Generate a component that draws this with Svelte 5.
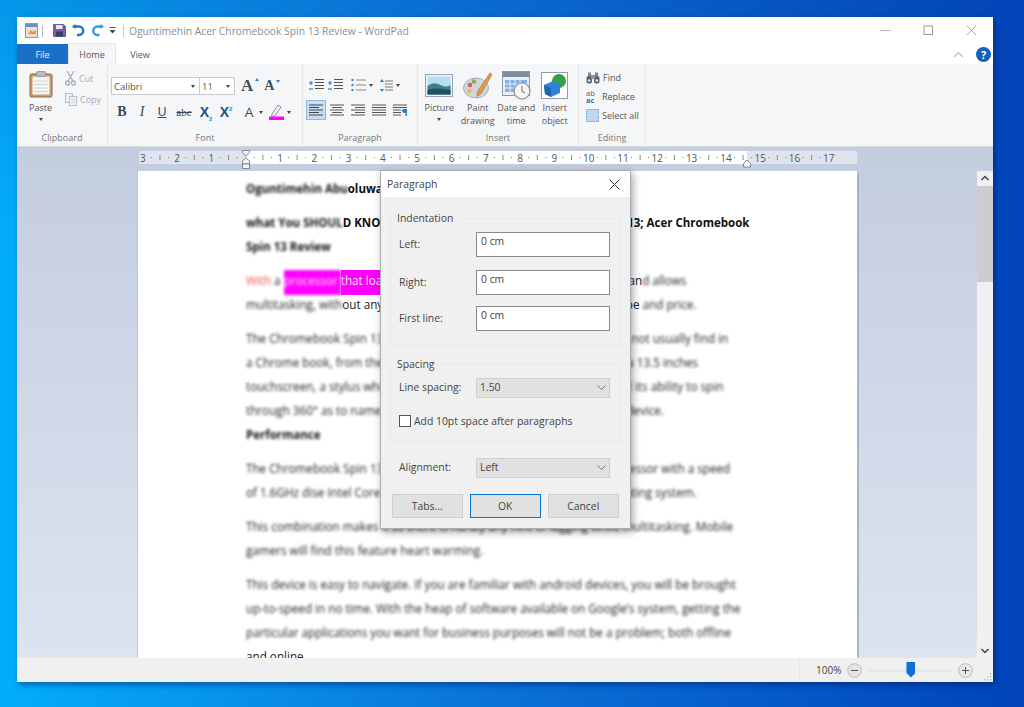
<script>
  const cm = 34.3
  const ticks = Array.from({ length: 21 }, (_, i) => i - 3)

  const paragraphs = [
    [[['Oguntimehin Abu', 'bb'], ['oluwa', 'b'], ['seun', 'b']]],
    [
      [['what You SHOUL', 'bb'], ['D KNOW ABOUT A NEW ACER CHROMEBOOK SPIN ', 'b'], ['13; Acer Chromebook', 'b']],
      [['Spin 13 Review', 'bb']]
    ],
    [
      [['With', 'bl red'], [' a ', 'bl'], ['processor\u00a0', 'bl hl'], ['that loads apps so fast', 'hl'], [' as the 2-in-1 screen flips over an', ''], ['d allows', 'bl']],
      [['multitasking, with', 'bl'], ['out any compromise on its speed, performance, shape', ''], [' and price.', 'bl']]
    ],
    [
      [['The Chromebook Spin 13 is one of those devices with features you will not usually find in', 'bl']],
      [['a Chrome book, from the lightweight aluminium body and a design to a 13.5 inches', 'bl']],
      [['touchscreen, a stylus which comes with them, is pressure sensitive and its ability to spin', 'bl']],
      [['through 360° as to name a few things about this beautiful convertible device.', 'bl']],
      [['Performance', 'bb']]
    ],
    [
      [['The Chromebook Spin 13 comes with an Intel Core m3 low power processor with a speed', 'bl']],
      [['of 1.6GHz dise Intel Core with a 4GB of memory and the Chrome operating system.', 'bl']]
    ],
    [
      [['This combination makes it so there is hardly any hint of lagging while multitasking. Mobile', 'bl']],
      [['gamers will find this feature heart warming.', 'bl']]
    ],
    [
      [['This device is easy to navigate. If you are familiar with android devices, you will be brought', 'bl']],
      [['up-to-speed in no time. With the heap of software available on Google’s system, getting the', 'bl']],
      [['particular applications you want for business purposes will not be a problem; both offline', 'bl']],
      [['and online.', '']]
    ]
  ]
</script>

<div class="desktop">
  <div class="window">
    <header class="titlebar">
      <svg class="app-icon" width="14" height="16" viewBox="0 0 14 16">
        <rect x="0.5" y="0.5" width="12" height="14" fill="#dfe5ef" stroke="#8497ad" />
        <rect x="1" y="1" width="11" height="3" fill="#6f8fb5" />
        <rect x="2" y="6" width="9" height="6" fill="#f5d9a8" />
        <path d="M3 11l3-4 2 2 3-2v4z" fill="#e9964a" />
      </svg>
      <span class="bar"></span>
      <svg class="qa save" width="13" height="13" viewBox="0 0 13 13">
        <path d="M0.5 0.5h10l2 2v10h-12z" fill="#7c5fa0" stroke="#5d4683" stroke-width="0.8" />
        <rect x="3" y="1" width="6.5" height="4" fill="#e8e6f2" />
        <rect x="3" y="7.5" width="7" height="5" fill="#34406f" />
      </svg>
      <svg class="qa undo" width="13" height="13" viewBox="0 0 13 13">
        <path d="M1.5 2.5h5.5a4 4 0 0 1 0 8.5h-2" fill="none" stroke="#1b77c9" stroke-width="2.4" />
        <path d="M0 2.5l3.5-2.5v5z" fill="#1b77c9" />
      </svg>
      <svg class="qa redo" width="13" height="13" viewBox="0 0 13 13">
        <path d="M11 2.5h-4.5a4 4 0 0 0 0 8.5h2" fill="none" stroke="#2f9be0" stroke-width="2.4" />
        <path d="M13 2.5l-3.5-2.5v5z" fill="#2f9be0" />
      </svg>
      <svg class="qa more" width="7" height="7" viewBox="0 0 7 7">
        <rect x="0.5" y="0" width="6" height="1" fill="#555" />
        <path d="M0.5 3h6l-3 3.5z" fill="#444" />
      </svg>
      <span class="bar tan"></span>
      <span class="doc-title">Oguntimehin Acer Chromebook Spin 13 Review - WordPad</span>
      <div class="caption">
        <svg width="11" height="11" viewBox="0 0 11 11"><path d="M0 5.5h11" stroke="#bbb" /></svg>
        <svg width="11" height="11" viewBox="0 0 11 11"><rect x="1" y="1" width="8.5" height="8.5" fill="none" stroke="#999" /></svg>
        <svg width="11" height="11" viewBox="0 0 11 11"><path d="M1 1l9 9M10 1l-9 9" stroke="#aaa" /></svg>
      </div>
    </header>

    <nav class="tabs">
      <span class="tab file">File</span>
      <span class="tab home">Home</span>
      <span class="tab">View</span>
      <svg class="collapse" width="11" height="7" viewBox="0 0 11 7"><path d="M1 6l4.500-4.500L10 6" fill="none" stroke="#bdbdbd" stroke-width="1.200" /></svg>
      <span class="help">?</span>
    </nav>

    <section class="ribbon">
      <div class="group clipboard">
        <div class="group-body">
          <div class="paste">
            <svg width="24" height="27" viewBox="0 0 24 27">
              <rect x="1" y="3" width="22" height="23" rx="1.500" fill="#c59a6d" stroke="#8c6a48" />
              <rect x="3.500" y="5.500" width="17" height="18" fill="#f5f5f3" />
              <path d="M5 10h14M5 13.500h14M5 17h14M5 20.500h14" stroke="#d4d4d4" />
              <rect x="7.500" y="0.500" width="9" height="5" rx="1" fill="#b9bcc2" stroke="#888" stroke-width="0.700" />
            </svg>
            <span class="lbl">Paste</span>
            <span class="caret"></span>
          </div>
          <div class="cut-copy">
            <div class="mini muted">
              <svg width="11" height="15" viewBox="0 0 11 15">
                <path d="M2 0l6 10M9 0L3 10" stroke="#a9b0bb" stroke-width="1.300" />
                <circle cx="2.500" cy="12" r="2" fill="none" stroke="#a9b0bb" stroke-width="1.300" />
                <circle cx="8.500" cy="12" r="2" fill="none" stroke="#a9b0bb" stroke-width="1.300" />
              </svg>
              <span>Cut</span>
            </div>
            <div class="mini muted">
              <svg width="12" height="13" viewBox="0 0 12 13">
                <rect x="0.500" y="0.500" width="7" height="9" fill="#eef0f3" stroke="#b8bdc6" />
                <rect x="4.500" y="3.500" width="7" height="9" fill="#f6f7f8" stroke="#b8bdc6" />
                <path d="M6 6h4M6 8h4M6 10h4" stroke="#cdd0d6" />
              </svg>
              <span>Copy</span>
            </div>
          </div>
        </div>
        <span class="group-label">Clipboard</span>
      </div>

      <div class="group font">
        <div class="group-body column">
          <div class="font-row">
            <div class="combo name"><span>Calibri</span><i class="caret dark"></i></div>
            <div class="combo size"><span>11</span><i class="caret dark"></i></div>
            <span class="grow big">A<i class="tri up"></i></span>
            <span class="grow small">A<i class="tri down"></i></span>
          </div>
          <div class="format-row">
            <span class="fmt bold">B</span>
            <span class="fmt ital">I</span>
            <span class="fmt under">U</span>
            <span class="fmt strike">abc</span>
            <span class="fmt script">X<sub>2</sub></span>
            <span class="fmt script">X<sup>2</sup></span>
            <span class="fmt color">A</span>
            <i class="caret dark"></i>
            <svg class="marker" width="15" height="16" viewBox="0 0 15 16">
              <path d="M3 10l6-9 3 2-6 9-3.500 0z" fill="#eee" stroke="#8b93a0" />
              <rect x="0" y="12.500" width="15" height="3.500" fill="#f0f" />
            </svg>
            <i class="caret dark"></i>
          </div>
        </div>
        <span class="group-label">Font</span>
      </div>

      <div class="group para">
        <div class="group-body column">
          <div class="para-row top">
            {#each [0, 1] as n}
              <svg width="16" height="14" viewBox="0 0 16 14">
                <path d="M6 1.500h9M6 4.500h9M6 7.500h9M6 10.500h9" stroke="#555" />
                <path d="M0 5h4M2 3v4" stroke="#2a7fd0" stroke-width="1.200" />
                <path d="M0 11h4" stroke="#2a7fd0" stroke-width="1.200" />
              </svg>
            {/each}
            <svg class="wide" width="15" height="14" viewBox="0 0 15 14">
              <path d="M5 2h10M5 7h10M5 12h10" stroke="#888" />
              <path d="M0.500 2h2M0.500 7h2M0.500 12h2" stroke="#2a7fd0" stroke-width="2" />
            </svg>
            <i class="caret dark"></i>
            <svg class="wide" width="13" height="15" viewBox="0 0 13 15">
              <path d="M5 3h8M5 6h8M5 9h8M5 12h8" stroke="#777" />
              <path d="M0 4l2-3 2 3zM0 11l2 3 2-3z" fill="#2a7fd0" />
            </svg>
            <i class="caret dark"></i>
          </div>
          <div class="para-row">
            <span class="align active">
              <svg width="14" height="12" viewBox="0 0 14 12"><path d="M0 1h14M0 3.500h10M0 6h14M0 8.500h10M0 11h14" stroke="#444" /></svg>
            </span>
            <span class="align">
              <svg width="14" height="12" viewBox="0 0 14 12"><path d="M0 1h14M2 3.500h10M0 6h14M2 8.500h10M0 11h14" stroke="#555" /></svg>
            </span>
            <span class="align">
              <svg width="14" height="12" viewBox="0 0 14 12"><path d="M0 1h14M4 3.500h10M0 6h14M4 8.500h10M0 11h14" stroke="#555" /></svg>
            </span>
            <span class="align">
              <svg width="14" height="12" viewBox="0 0 14 12"><path d="M0 1h14M0 3.500h14M0 6h14M0 8.500h14M0 11h14" stroke="#555" /></svg>
            </span>
            <span class="align">
              <svg width="14" height="12" viewBox="0 0 14 12">
                <path d="M0 1h14M0 3.500h14M0 6h8M0 8.500h8M0 11h8" stroke="#555" />
                <path d="M10 5h4v7h-1.500v-3.500a2 2 0 0 1-2.500-3.500z" fill="#2a7fd0" />
              </svg>
            </span>
          </div>
        </div>
        <span class="group-label">Paragraph</span>
      </div>

      <div class="group insert">
        <div class="group-body">
          <div class="tool">
            <svg width="28" height="23" viewBox="0 0 28 23">
              <rect x="0.500" y="0.500" width="27" height="22" fill="#eef1f5" stroke="#9aa5b4" />
              <rect x="2.500" y="2.500" width="23" height="18" fill="#b9dcee" />
              <path d="M2.500 12c5-4 9-3 13-1s7 2 10 0v9.500h-23z" fill="#3f7f8c" />
              <path d="M2.500 16c8-3 15-1 23 0v4.500h-23z" fill="#24505c" />
            </svg>
            <span class="lbl">Picture</span>
            <span class="caret"></span>
          </div>
          <div class="tool">
            <svg width="30" height="27" viewBox="0 0 30 27">
              <ellipse cx="13" cy="16" rx="12.500" ry="10" fill="#cfd6df" stroke="#a7afba" />
              <circle cx="7" cy="13" r="2.200" fill="#d95b4a" />
              <circle cx="11" cy="9.500" r="2.200" fill="#7fb24a" />
              <circle cx="6.500" cy="19" r="2.200" fill="#e9b83f" />
              <path d="M27 1l2 1.500-11 19-4 3 .500-5z" fill="#e59a3b" stroke="#a9692a" stroke-width="0.600" />
            </svg>
            <span class="lbl">Paint<br />drawing</span>
          </div>
          <div class="tool">
            <svg width="29" height="29" viewBox="0 0 29 29">
              <rect x="0.500" y="0.500" width="27" height="24" fill="#e9eff8" stroke="#8d98aa" />
              <rect x="1" y="1" width="26" height="5" fill="#7f8da3" />
              <path d="M3 9h22v12H3z" fill="#7fb0ea" />
              <path d="M3 13h22M3 17h22M8 9v12M13 9v12M18 9v12" stroke="#eaf2fc" />
              <circle cx="20" cy="20" r="8" fill="#f6f6f6" stroke="#8d8d8d" stroke-width="1.200" />
              <path d="M20 15v5.500l3 1.500" fill="none" stroke="#666" />
            </svg>
            <span class="lbl">Date and<br />time</span>
          </div>
          <div class="tool">
            <svg width="27" height="27" viewBox="0 0 27 27">
              <rect x="0.500" y="0.500" width="26" height="26" fill="#fff" stroke="#9a9a9a" />
              <circle cx="18" cy="9" r="7" fill="#34a04a" />
              <path d="M3 13l9-4 7 3v9l-9 4-6-3z" fill="#2e85d8" />
              <path d="M3 13l7 3v9l-6-3z" fill="#2266ad" />
            </svg>
            <span class="lbl">Insert<br />object</span>
          </div>
        </div>
        <span class="group-label">Insert</span>
      </div>

      <div class="group editing">
        <div class="group-body column">
          <div class="mini">
            <svg width="14" height="12" viewBox="0 0 14 12">
              <rect x="0.500" y="4" width="5.500" height="7.500" rx="2" fill="#56606e" />
              <rect x="8" y="4" width="5.500" height="7.500" rx="2" fill="#56606e" />
              <rect x="5" y="3" width="4" height="4" fill="#8b95a3" />
              <rect x="2" y="0.500" width="3" height="4" fill="#7b8593" />
              <rect x="9" y="0.500" width="3" height="4" fill="#7b8593" />
              <circle cx="3.200" cy="8.500" r="1.500" fill="#bcd5ee" />
              <circle cx="10.800" cy="8.500" r="1.500" fill="#bcd5ee" />
            </svg>
            <span>Find</span>
          </div>
          <div class="mini">
            <span class="replace"><b>ab</b><b class="blue">ac</b></span>
            <span>Replace</span>
          </div>
          <div class="mini">
            <svg width="13" height="13" viewBox="0 0 13 13">
              <rect x="0.500" y="0.500" width="12" height="12" fill="#bcd8f3" stroke="#6f98c4" stroke-dasharray="1.500 1" />
            </svg>
            <span>Select all</span>
          </div>
        </div>
        <span class="group-label">Editing</span>
      </div>
    </section>

    <div class="work">
      <div class="ruler">
        <svg width="976" height="25" viewBox="17 146 976 25">
          <rect x="139" y="151" width="718" height="13" fill="#dfe4ee" />
          <rect x="246" y="151" width="501" height="13" fill="#fff" />
          {#each ticks as t}
            {@const x = 245.7 + t * cm}
            {#if t !== 0}
              <text {x} y="161.500" text-anchor="middle" class="rule-num">{Math.abs(t)}</text>
            {/if}
            {#if t < 17}
              <rect x={x + cm * 0.25 - 0.500} y="157" width="1" height="1" fill="#777" />
              <rect x={x + cm * 0.5 - 0.500} y="155" width="1" height="5" fill="#888" />
              <rect x={x + cm * 0.75 - 0.500} y="157" width="1" height="1" fill="#777" />
            {/if}
          {/each}
          <path d="M242.500 150.500h7v2l-3.500 4-3.500-4zM246 158l3.500 3v3h-7v-3z" fill="#f3f5f8" stroke="#7c8794" />
          <rect x="242.500" y="164" width="7" height="4.500" fill="#f3f5f8" stroke="#7c8794" />
          <path d="M747 160l3.500 3.500v3.500h-7v-3.500z" fill="#f3f5f8" stroke="#7c8794" />
        </svg>
      </div>
      <div class="main">
        <div class="canvas">
          <div class="page">
            {#each paragraphs as para}
              <div class="para-text">
                {#each para as line}
                  <div class="line">
                    {#each line as [text, cls]}<span class={cls}>{text}</span>{/each}
                  </div>
                {/each}
              </div>
            {/each}
          </div>
        </div>
        <div class="scrollbar">
          <svg class="arrow" width="16" height="15" viewBox="0 0 16 15"><path d="M4.500 9l3.500-3.500L11.500 9" fill="none" stroke="#444" stroke-width="1.500" /></svg>
          <div class="thumb"></div>
          <svg class="arrow end" width="16" height="15" viewBox="0 0 16 15"><path d="M4.500 6l3.500 3.500L11.500 6" fill="none" stroke="#444" stroke-width="1.500" /></svg>
        </div>
      </div>
    </div>

    <footer class="status">
      <span class="sep"></span>
      <span class="zoom-val">100%</span>
      <svg class="round" width="15" height="15" viewBox="0 0 15 15"><circle cx="7.500" cy="7.500" r="6.800" fill="#e4e4e4" stroke="#bbb" /><path d="M4 7.500h7" stroke="#555" /></svg>
      <div class="slider"><span class="knob"></span></div>
      <svg class="round" width="15" height="15" viewBox="0 0 15 15"><circle cx="7.500" cy="7.500" r="6.800" fill="#e9e9e9" stroke="#bbb" /><path d="M4 7.500h7M7.500 4v7" stroke="#555" /></svg>
      <svg class="grip" width="9" height="9" viewBox="0 0 9 9"><path d="M7 1h1.500v1.500H7zM4 4h1.500v1.500H4zM7 4h1.500v1.500H7zM1 7h1.500v1.500H1zM4 7h1.500v1.500H4zM7 7h1.500v1.500H7z" fill="#c4c4c4" /></svg>
    </footer>

    <div class="dialog">
      <div class="dlg-title">
        <span>Paragraph</span>
        <svg width="11" height="11" viewBox="0 0 11 11"><path d="M0.500 0.500l10 10M10.500 0.500l-10 10" stroke="#333" /></svg>
      </div>
      <div class="dlg-body">
        <fieldset class="indent">
          <legend>Indentation</legend>
          <label class="row"><span>Left:</span><div class="input">0 cm</div></label>
          <label class="row"><span>Right:</span><div class="input">0 cm</div></label>
          <label class="row"><span>First line:</span><div class="input">0 cm</div></label>
        </fieldset>
        <fieldset class="spacing">
          <legend>Spacing</legend>
          <div class="row low">
            <span>Line spacing:</span>
            <div class="select">1.50<svg width="9" height="5" viewBox="0 0 9 5"><path d="M0.500 0.500l4 4 4-4" fill="none" stroke="#777" /></svg></div>
          </div>
          <div class="check"><span class="box"></span><span>Add 10pt space after paragraphs</span></div>
        </fieldset>
        <div class="row low align-row">
          <span>Alignment:</span>
          <div class="select">Left<svg width="9" height="5" viewBox="0 0 9 5"><path d="M0.500 0.500l4 4 4-4" fill="none" stroke="#777" /></svg></div>
        </div>
        <div class="buttons">
          <button>Tabs...</button>
          <button class="primary">OK</button>
          <button>Cancel</button>
        </div>
      </div>
    </div>
  </div>
</div>

<style>
  :global(body) {
    margin: 0;
    overflow: hidden;
  }

  .desktop {
    box-sizing: border-box;
    height: 707px;
    padding: 17px 31px 25px 17px;
    background:
      linear-gradient(180deg, rgba(12, 70, 170, 0.22) 0%, rgba(12, 70, 170, 0) 35%),
      linear-gradient(90deg, #02aefc 0%, #0a76da 45%, #0043bb 100%);
    font-family: "Open Sans", "Liberation Sans", sans-serif;
    color: #444;
  }

  .window {
    position: relative;
    display: flex;
    flex-direction: column;
    height: 665px;
    background: #fff;
    box-shadow: 2px 3px 6px rgba(0, 20, 80, 0.45);
  }

  .titlebar {
    display: flex;
    align-items: center;
    height: 27px;
    padding: 0 0 0 8px;
    flex: none;
  }

  .bar {
    width: 1px;
    height: 12px;
    margin: 0 10px 0 3px;
    background: #bbb;
  }

  .bar.tan {
    margin: 0 5px 0 7px;
    background: #d8c7ae;
  }

  .qa {
    margin-right: 6px;
  }

  .more {
    margin-left: -1px;
    margin-right: 0;
  }

  .doc-title {
    font-size: 10.300px;
    color: #8d8d8d;
    white-space: nowrap;
  }

  .caption {
    display: flex;
    gap: 32px;
    margin-left: auto;
    margin-right: 16px;
  }

  .tabs {
    display: flex;
    align-items: stretch;
    height: 20px;
    flex: none;
    font-size: 9px;
    color: #555;
    position: relative;
  }

  .tab {
    display: flex;
    align-items: center;
    justify-content: center;
    width: 48px;
  }

  .tab.file {
    width: 51px;
    background: #1a6fc6;
    color: #e8f1fb;
  }

  .tab.home {
    width: 48px;
    background: #f5f6f7;
    border: 1px solid #e4e6e9;
    border-bottom: 0;
    box-sizing: border-box;
    margin-top: -1px;
    height: 21px;
  }

  .collapse {
    margin-left: auto;
    margin-right: 6px;
    align-self: center;
  }

  .help {
    width: 15px;
    height: 15px;
    border-radius: 50%;
    background: #1560b4;
    color: #fff;
    font-size: 11px;
    font-weight: 700;
    line-height: 15px;
    text-align: center;
    align-self: center;
    margin: 0 2px 0 6px;
  }

  .ribbon {
    display: flex;
    height: 82px;
    flex: none;
    background: #f5f6f7;
    font-size: 9px;
    color: #555;
  }

  .group {
    display: flex;
    flex-direction: column;
    box-sizing: border-box;
    border-right: 1px solid #e3e5e8;
    margin-bottom: 1px;
  }

  .group-body {
    flex: 1;
    display: flex;
  }

  .column {
    flex-direction: column;
  }

  .group-label {
    text-align: center;
    font-size: 9px;
    color: #777;
    line-height: 14px;
  }

  .clipboard {
    width: 91px;
  }

  .paste {
    display: flex;
    flex-direction: column;
    align-items: center;
    width: 25px;
    margin: 7px 0 0 11px;
  }

  .paste .lbl {
    margin-top: 4px;
  }

  .lbl {
    line-height: 12.500px;
    text-align: center;
    white-space: nowrap;
  }

  .caret {
    display: block;
    width: 0;
    height: 0;
    margin-top: 3px;
    border: 2.500px solid transparent;
    border-top: 3px solid #444;
    border-bottom: 0;
  }

  .caret.dark {
    margin-top: 0;
    flex: none;
  }

  .cut-copy {
    display: flex;
    flex-direction: column;
    gap: 2px;
    margin: 5px 0 0 12px;
  }

  .mini {
    display: flex;
    align-items: center;
    gap: 3px;
    height: 19px;
  }

  .muted {
    color: #a6abb3;
  }

  .font {
    width: 195px;
  }

  .font-row {
    display: flex;
    align-items: center;
    margin: 12px 0 0 3px;
  }

  .combo {
    display: flex;
    align-items: center;
    justify-content: space-between;
    box-sizing: border-box;
    height: 18px;
    padding: 0 4px 0 2px;
    background: #fff;
    border: 1px solid #c5c8cd;
    font-size: 9.500px;
    color: #555;
  }

  .combo.name {
    width: 89px;
  }

  .combo.size {
    width: 36px;
    margin-left: -1px;
  }

  .grow {
    position: relative;
    font-family: "Liberation Serif", serif;
    font-weight: 700;
    color: #444c58;
  }

  .grow.big {
    font-size: 17px;
    margin-left: 6px;
  }

  .grow.small {
    font-size: 14px;
    margin-left: 11px;
  }

  .tri {
    position: absolute;
    top: 2px;
    right: -6px;
    border: 2.500px solid transparent;
  }

  .tri.up {
    border-bottom: 3px solid #2a7fd0;
    border-top: 0;
  }

  .tri.down {
    border-top: 3px solid #2a7fd0;
    border-bottom: 0;
  }

  .format-row {
    display: flex;
    align-items: center;
    margin: 8px 0 0 4px;
  }

  .fmt {
    display: block;
    width: 20px;
    text-align: center;
    font-size: 13px;
    color: #3c4656;
    font-family: "Liberation Serif", serif;
    white-space: nowrap;
  }

  .bold {
    font-weight: 700;
    font-size: 14px;
  }

  .ital {
    font-style: italic;
    font-size: 14px;
  }

  .under {
    text-decoration: underline;
    font-family: "Liberation Sans", sans-serif;
    font-size: 12px;
  }

  .strike {
    text-decoration: line-through;
    font-size: 11px;
    margin: 0 2px;
  }

  .script {
    font-family: "Liberation Sans", sans-serif;
    font-weight: 700;
    font-size: 14px;
    color: #1f4f8a;
  }

  .script sub,
  .script sup {
    font-size: 6px;
    color: #2a7fd0;
    line-height: 0;
  }

  .color {
    width: 16px;
    margin-left: 5px;
    margin-right: 2px;
    font-size: 13px;
    font-family: "Liberation Sans", sans-serif;
  }

  .marker {
    margin: 0 3px 0 6px;
  }

  .para {
    width: 115px;
  }

  .para-row {
    display: flex;
    align-items: center;
    margin-left: 3px;
  }

  .para-row.top {
    height: 18px;
    margin: 12px 0 0 6px;
    gap: 3px;
  }

  .para-row.top .wide {
    margin-left: 4px;
  }

  .para-row:not(.top) {
    margin-top: 6px;
  }

  .align {
    display: flex;
    align-items: center;
    justify-content: center;
    box-sizing: border-box;
    width: 20px;
    height: 20px;
    margin-right: 1px;
    border: 1px solid transparent;
  }

  .align.active {
    background: #c7dff5;
    border-color: #8db8e0;
  }

  .insert {
    width: 161px;
  }

  .insert .group-body {
    padding: 7px 0 0 2px;
    gap: 0;
  }

  .tool {
    display: flex;
    flex-direction: column;
    align-items: center;
    width: 38.500px;
  }

  .tool svg {
    height: 29px;
    margin-bottom: 2px;
  }

  .editing {
    width: 67px;
    border-right: 1px solid #e9ebed;
  }

  .editing .group-body {
    padding: 4px 0 0 7px;
  }

  .replace {
    display: flex;
    flex-direction: column;
    width: 13px;
    font-size: 7.500px;
    line-height: 6.500px;
    color: #555;
    font-weight: 400;
  }

  .replace b {
    font-weight: 400;
  }

  .replace .blue {
    color: #1f6fc0;
    font-weight: 700;
  }

  .work {
    flex: 1;
    min-height: 0;
    display: flex;
    flex-direction: column;
    background: linear-gradient(180deg, #c3cde0 0%, #dde4f0 100%);
    border-top: 0;
    box-shadow: inset 0 1px 0 #d9dadd;
  }

  .ruler {
    height: 25px;
    flex: none;
  }

  .ruler svg {
    display: block;
  }

  .rule-num {
    font-family: "Open Sans", sans-serif;
    font-size: 10px;
    fill: #555;
  }

  .main {
    flex: 1;
    min-height: 0;
    display: flex;
  }

  .canvas {
    flex: 1;
    min-width: 0;
    overflow: hidden;
    padding-left: 121px;
  }

  .page {
    box-sizing: border-box;
    width: 719px;
    height: 100%;
    padding: 5px 0 0 108px;
    background: #fff;
    box-shadow: -1.500px 0 1px #aab2c6, 1.500px 0 1px #aab2c6;
    font-size: 11.700px;
    color: #222;
    overflow: hidden;
  }

  .para-text {
    margin-bottom: 10px;
  }

  .line {
    height: 24px;
    line-height: 24px;
    white-space: nowrap;
  }

  .b,
  .bb {
    font-weight: 700;
    font-size: 11.500px;
    color: #111;
  }

  .bl,
  .bb {
    filter: blur(1.600px);
  }

  .red {
    color: #f05050;
  }

  .hl {
    display: inline-block;
    vertical-align: top;
    height: 25px;
    margin-top: 2px;
    line-height: 20px;
    background: #f0f;
    color: #f8e0f8;
  }

  .scrollbar {
    position: relative;
    display: flex;
    flex-direction: column;
    flex: none;
    width: 16px;
    background: #f0f0f0;
  }

  .arrow {
    flex: none;
  }

  .arrow.end {
    margin-top: auto;
  }

  .thumb {
    height: 96px;
    background: #cdcdcd;
  }

  .status {
    display: flex;
    align-items: center;
    height: 24px;
    flex: none;
    background: #f0f0f0;
    font-size: 10px;
    color: #444;
    position: relative;
  }

  .sep {
    width: 1px;
    height: 22px;
    margin-left: 782px;
    background: #e6e6e6;
  }

  .zoom-val {
    margin-left: 16px;
  }

  .round {
    margin-left: 6px;
  }

  .slider {
    position: relative;
    width: 84px;
    height: 3px;
    margin-left: 6px;
    background: #e6e6e6;
  }

  .knob {
    position: absolute;
    left: 38px;
    top: -7px;
    width: 9px;
    height: 16px;
    background: #0f6fd6;
    clip-path: polygon(0 0, 100% 0, 100% 72%, 50% 100%, 0 72%);
  }

  .grip {
    position: absolute;
    right: 1px;
    bottom: 1px;
  }

  /* the dialog floats over the document */
  .dialog {
    position: absolute;
    left: 363px;
    top: 153px;
    box-sizing: border-box;
    width: 251px;
    height: 359px;
    background: #f0f0f0;
    border: 1px solid #a9adb3;
    box-shadow: 2px 3px 8px rgba(0, 0, 0, 0.35);
    font-size: 10.400px;
    color: #444;
  }

  .dlg-title {
    display: flex;
    align-items: center;
    justify-content: space-between;
    height: 26px;
    padding: 0 10px 0 6px;
    background: #fff;
  }

  .dlg-body {
    padding: 0 9px;
  }

  fieldset {
    margin: 14px 0 0;
    padding: 7px 0 14px 8px;
    border: 1px solid #e8e8e8;
    min-width: 0;
  }

  .spacing {
    margin-top: 11px;
    padding-bottom: 14px;
  }

  legend {
    padding: 0 6px 0 0;
    margin-left: -2px;
    line-height: 14px;
  }

  .row {
    display: flex;
    align-items: center;
    height: 25px;
    margin-bottom: 13px;
  }

  .indent .row:nth-of-type(2) {
    margin-bottom: 11px;
  }

  .indent .row:last-of-type {
    margin-bottom: 0;
  }

  .row > span {
    width: 77px;
    margin-top: -2px;
  }

  .input {
    box-sizing: border-box;
    width: 133.500px;
    height: 25px;
    padding: 1px 4px;
    background: #fff;
    border: 1px solid #8a8a8a;
    line-height: 14px;
  }

  .row.low {
    height: 20px;
    margin-bottom: 16px;
  }

  .select {
    display: flex;
    align-items: center;
    justify-content: space-between;
    box-sizing: border-box;
    width: 133.500px;
    height: 20px;
    padding: 0 3px 2px 3px;
    background: #e1e1e1;
    border: 1px solid #cfcfcf;
  }

  .check {
    display: flex;
    align-items: center;
    gap: 3px;
    height: 13px;
  }

  .box {
    width: 12px;
    height: 12px;
    box-sizing: border-box;
    background: #fff;
    border: 1px solid #555;
  }

  .row.low.align-row {
    margin: 16px 0 16px 9px;
  }

  .buttons {
    display: flex;
    gap: 7.500px;
    margin-left: 2px;
  }

  button {
    box-sizing: border-box;
    width: 70.500px;
    height: 24px;
    padding: 0;
    background: #e1e1e1;
    border: 1px solid #cdcdcd;
    font: inherit;
    color: #444;
  }

  button.primary {
    border: 1.500px solid #0078d7;
  }
</style>
